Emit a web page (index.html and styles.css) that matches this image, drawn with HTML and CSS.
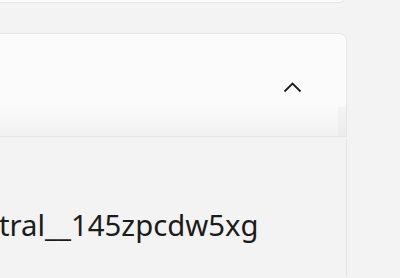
FILE: index.html
```html
<!DOCTYPE html>
<html>
<head>
<meta charset="utf-8">
<link rel="stylesheet" href="styles.css">
</head>
<body>
<div class="page">
  <div class="card-prev"></div>
  <div class="expander">
    <div class="expander-header">
      <div class="header-fill"></div>
      <svg class="chevron" width="20" height="12" viewBox="0 0 20 12">
        <path d="M1.5 10.5 L9.5 2.5 L17.5 10.5" fill="none" stroke="#1b1b1b" stroke-width="1.8"/>
      </svg>
      <div class="scroll-strip"></div>
    </div>
    <div class="expander-content">
      <div class="value">tral__145zpcdw5xg</div>
    </div>
  </div>
</div>
</body>
</html>
```
FILE: styles.css
```css
html, body {
  margin: 0;
  padding: 0;
  background: #f3f3f3;
}
.page {
  display: flow-root;
  overflow: hidden;
  width: 367px;
  margin-left: -20px;
  height: 278px;
}
.card-prev {
  height: 42px;
  margin-top: -39px;
  background: #fbfbfb;
  border: 1px solid #e5e5e5;
  border-top: none;
  border-radius: 0 0 7px 7px;
  box-sizing: border-box;
  width: 366px;
}
.expander {
  margin-top: 30px;
}
.expander-header {
  position: relative;
  height: 104px;
  box-sizing: border-box;
  border: 1px solid #e5e5e5;
  border-radius: 7px 7px 0 0;
  background: linear-gradient(to bottom, #fbfbfb 0px, #fbfbfb 72px, #f1f1f1 102px);
  display: flex;
  align-items: center;
  justify-content: flex-end;
  padding: 4px 43px 0 0;
}
.header-fill { flex: 1; }
.chevron { display: block; }
.scroll-strip {
  position: absolute;
  right: 0;
  bottom: 0;
  width: 8px;
  height: 29px;
  background: linear-gradient(to bottom, #f4f4f4, #ebebeb);
}
.expander-content {
  margin-top: 3px;
  border-right: 1px solid #e5e5e5;
  width: 367px;
  box-sizing: border-box;
  height: 137px;
  padding-top: 65px;
}
.value {
  font-family: "Noto Sans", "Open Sans", sans-serif;
  font-size: 29.3px;
  color: #1b1b1b;
  line-height: 40px;
  margin-left: 19px;
}
```
